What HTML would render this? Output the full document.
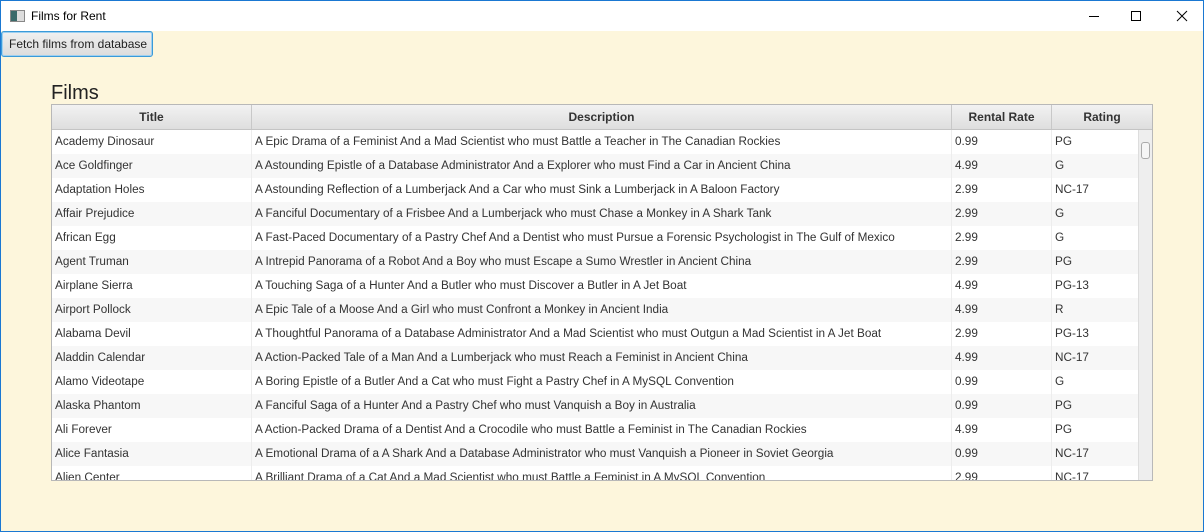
<!DOCTYPE html>
<html><head><meta charset="utf-8"><style>
*{box-sizing:border-box;margin:0;padding:0}
body{width:1204px;height:532px;overflow:hidden;font-family:"Liberation Sans",sans-serif;background:#fdf6dc;position:relative}
.win{position:absolute;inset:0;border:1px solid #1a78d2;border-top:none}
.tb{position:absolute;left:0;top:0;width:1204px;height:31px;background:#fff;border:1px solid #1a78d2;border-bottom:none}
.tb .t{position:absolute;left:30px;top:8px;font-size:12px;color:#000}
.ic{position:absolute;left:9px;top:9px;width:15px;height:12px;border:1px solid #888;background:linear-gradient(90deg,#3a6a6a 0 6px,#ddd 6px)}
.btn{position:absolute;left:1px;top:31px;width:152px;height:26px;border:1px solid #3a9ad9;border-radius:3px;background:linear-gradient(#f0f0f0,#dcdcdc);font-size:12px;color:#222;padding:5px 0 0 7px;box-shadow:inset 0 0 0 1px #9fd0f0}
h1{position:absolute;left:51px;top:82px;font-size:20px;font-weight:normal;color:#222}
.tbl{position:absolute;left:51px;top:104px;width:1102px;height:377px;border:1px solid #b8b8b8;background:#fff;overflow:hidden}
.hd{display:flex;height:25px;background:linear-gradient(#f2f2f2,#dedede);border-bottom:1px solid #c4c4c4}
.hd div{border-right:1px solid #c8c8c8;font-size:12px;font-weight:bold;color:#333;text-align:center;line-height:24px}
.r{display:flex;height:24px;font-size:11.75px;color:#333;line-height:23px}
.r:nth-child(even){background:#f7f7f7}
.r div{border-right:1px solid #ededed;padding-left:3px;white-space:nowrap;overflow:hidden}
.c1{width:200px}.c2{width:700px}.c3{width:100px}.c4{width:87px}
.hd .c4{width:100px;border-right:none}
.sb{position:absolute;right:0;top:25px;width:14px;bottom:0;background:#eee;border-left:1px solid #ddd}
.th{position:absolute;left:2px;top:12px;width:9px;height:17px;border:1px solid #aaa;border-radius:3px;background:#f5f5f5}
</style></head><body>
<div class="win"></div>
<div class="tb"><div class="ic"></div><div class="t">Films for Rent</div>
<svg style="position:absolute;left:1080px;top:8px" width="115" height="16"><path d="M8 7.5h10" stroke="#000"/><rect x="50.5" y="2.5" width="9" height="9" fill="none" stroke="#000"/><path d="M96 2l10 10M106 2l-10 10" stroke="#000"/></svg></div>
<div class="btn">Fetch films from database</div>
<h1>Films</h1>
<div class="tbl">
<div class="hd"><div class="c1">Title</div><div class="c2">Description</div><div class="c3">Rental Rate</div><div class="c4">Rating</div></div>
<div>
<div class="r"><div class="c1">Academy Dinosaur</div><div class="c2">A Epic Drama of a Feminist And a Mad Scientist who must Battle a Teacher in The Canadian Rockies</div><div class="c3">0.99</div><div class="c4">PG</div></div>
<div class="r"><div class="c1">Ace Goldfinger</div><div class="c2">A Astounding Epistle of a Database Administrator And a Explorer who must Find a Car in Ancient China</div><div class="c3">4.99</div><div class="c4">G</div></div>
<div class="r"><div class="c1">Adaptation Holes</div><div class="c2">A Astounding Reflection of a Lumberjack And a Car who must Sink a Lumberjack in A Baloon Factory</div><div class="c3">2.99</div><div class="c4">NC-17</div></div>
<div class="r"><div class="c1">Affair Prejudice</div><div class="c2">A Fanciful Documentary of a Frisbee And a Lumberjack who must Chase a Monkey in A Shark Tank</div><div class="c3">2.99</div><div class="c4">G</div></div>
<div class="r"><div class="c1">African Egg</div><div class="c2">A Fast-Paced Documentary of a Pastry Chef And a Dentist who must Pursue a Forensic Psychologist in The Gulf of Mexico</div><div class="c3">2.99</div><div class="c4">G</div></div>
<div class="r"><div class="c1">Agent Truman</div><div class="c2">A Intrepid Panorama of a Robot And a Boy who must Escape a Sumo Wrestler in Ancient China</div><div class="c3">2.99</div><div class="c4">PG</div></div>
<div class="r"><div class="c1">Airplane Sierra</div><div class="c2">A Touching Saga of a Hunter And a Butler who must Discover a Butler in A Jet Boat</div><div class="c3">4.99</div><div class="c4">PG-13</div></div>
<div class="r"><div class="c1">Airport Pollock</div><div class="c2">A Epic Tale of a Moose And a Girl who must Confront a Monkey in Ancient India</div><div class="c3">4.99</div><div class="c4">R</div></div>
<div class="r"><div class="c1">Alabama Devil</div><div class="c2">A Thoughtful Panorama of a Database Administrator And a Mad Scientist who must Outgun a Mad Scientist in A Jet Boat</div><div class="c3">2.99</div><div class="c4">PG-13</div></div>
<div class="r"><div class="c1">Aladdin Calendar</div><div class="c2">A Action-Packed Tale of a Man And a Lumberjack who must Reach a Feminist in Ancient China</div><div class="c3">4.99</div><div class="c4">NC-17</div></div>
<div class="r"><div class="c1">Alamo Videotape</div><div class="c2">A Boring Epistle of a Butler And a Cat who must Fight a Pastry Chef in A MySQL Convention</div><div class="c3">0.99</div><div class="c4">G</div></div>
<div class="r"><div class="c1">Alaska Phantom</div><div class="c2">A Fanciful Saga of a Hunter And a Pastry Chef who must Vanquish a Boy in Australia</div><div class="c3">0.99</div><div class="c4">PG</div></div>
<div class="r"><div class="c1">Ali Forever</div><div class="c2">A Action-Packed Drama of a Dentist And a Crocodile who must Battle a Feminist in The Canadian Rockies</div><div class="c3">4.99</div><div class="c4">PG</div></div>
<div class="r"><div class="c1">Alice Fantasia</div><div class="c2">A Emotional Drama of a A Shark And a Database Administrator who must Vanquish a Pioneer in Soviet Georgia</div><div class="c3">0.99</div><div class="c4">NC-17</div></div>
<div class="r"><div class="c1">Alien Center</div><div class="c2">A Brilliant Drama of a Cat And a Mad Scientist who must Battle a Feminist in A MySQL Convention</div><div class="c3">2.99</div><div class="c4">NC-17</div></div>
</div>
<div class="sb"><div class="th"></div></div>
</div>
</body></html>
